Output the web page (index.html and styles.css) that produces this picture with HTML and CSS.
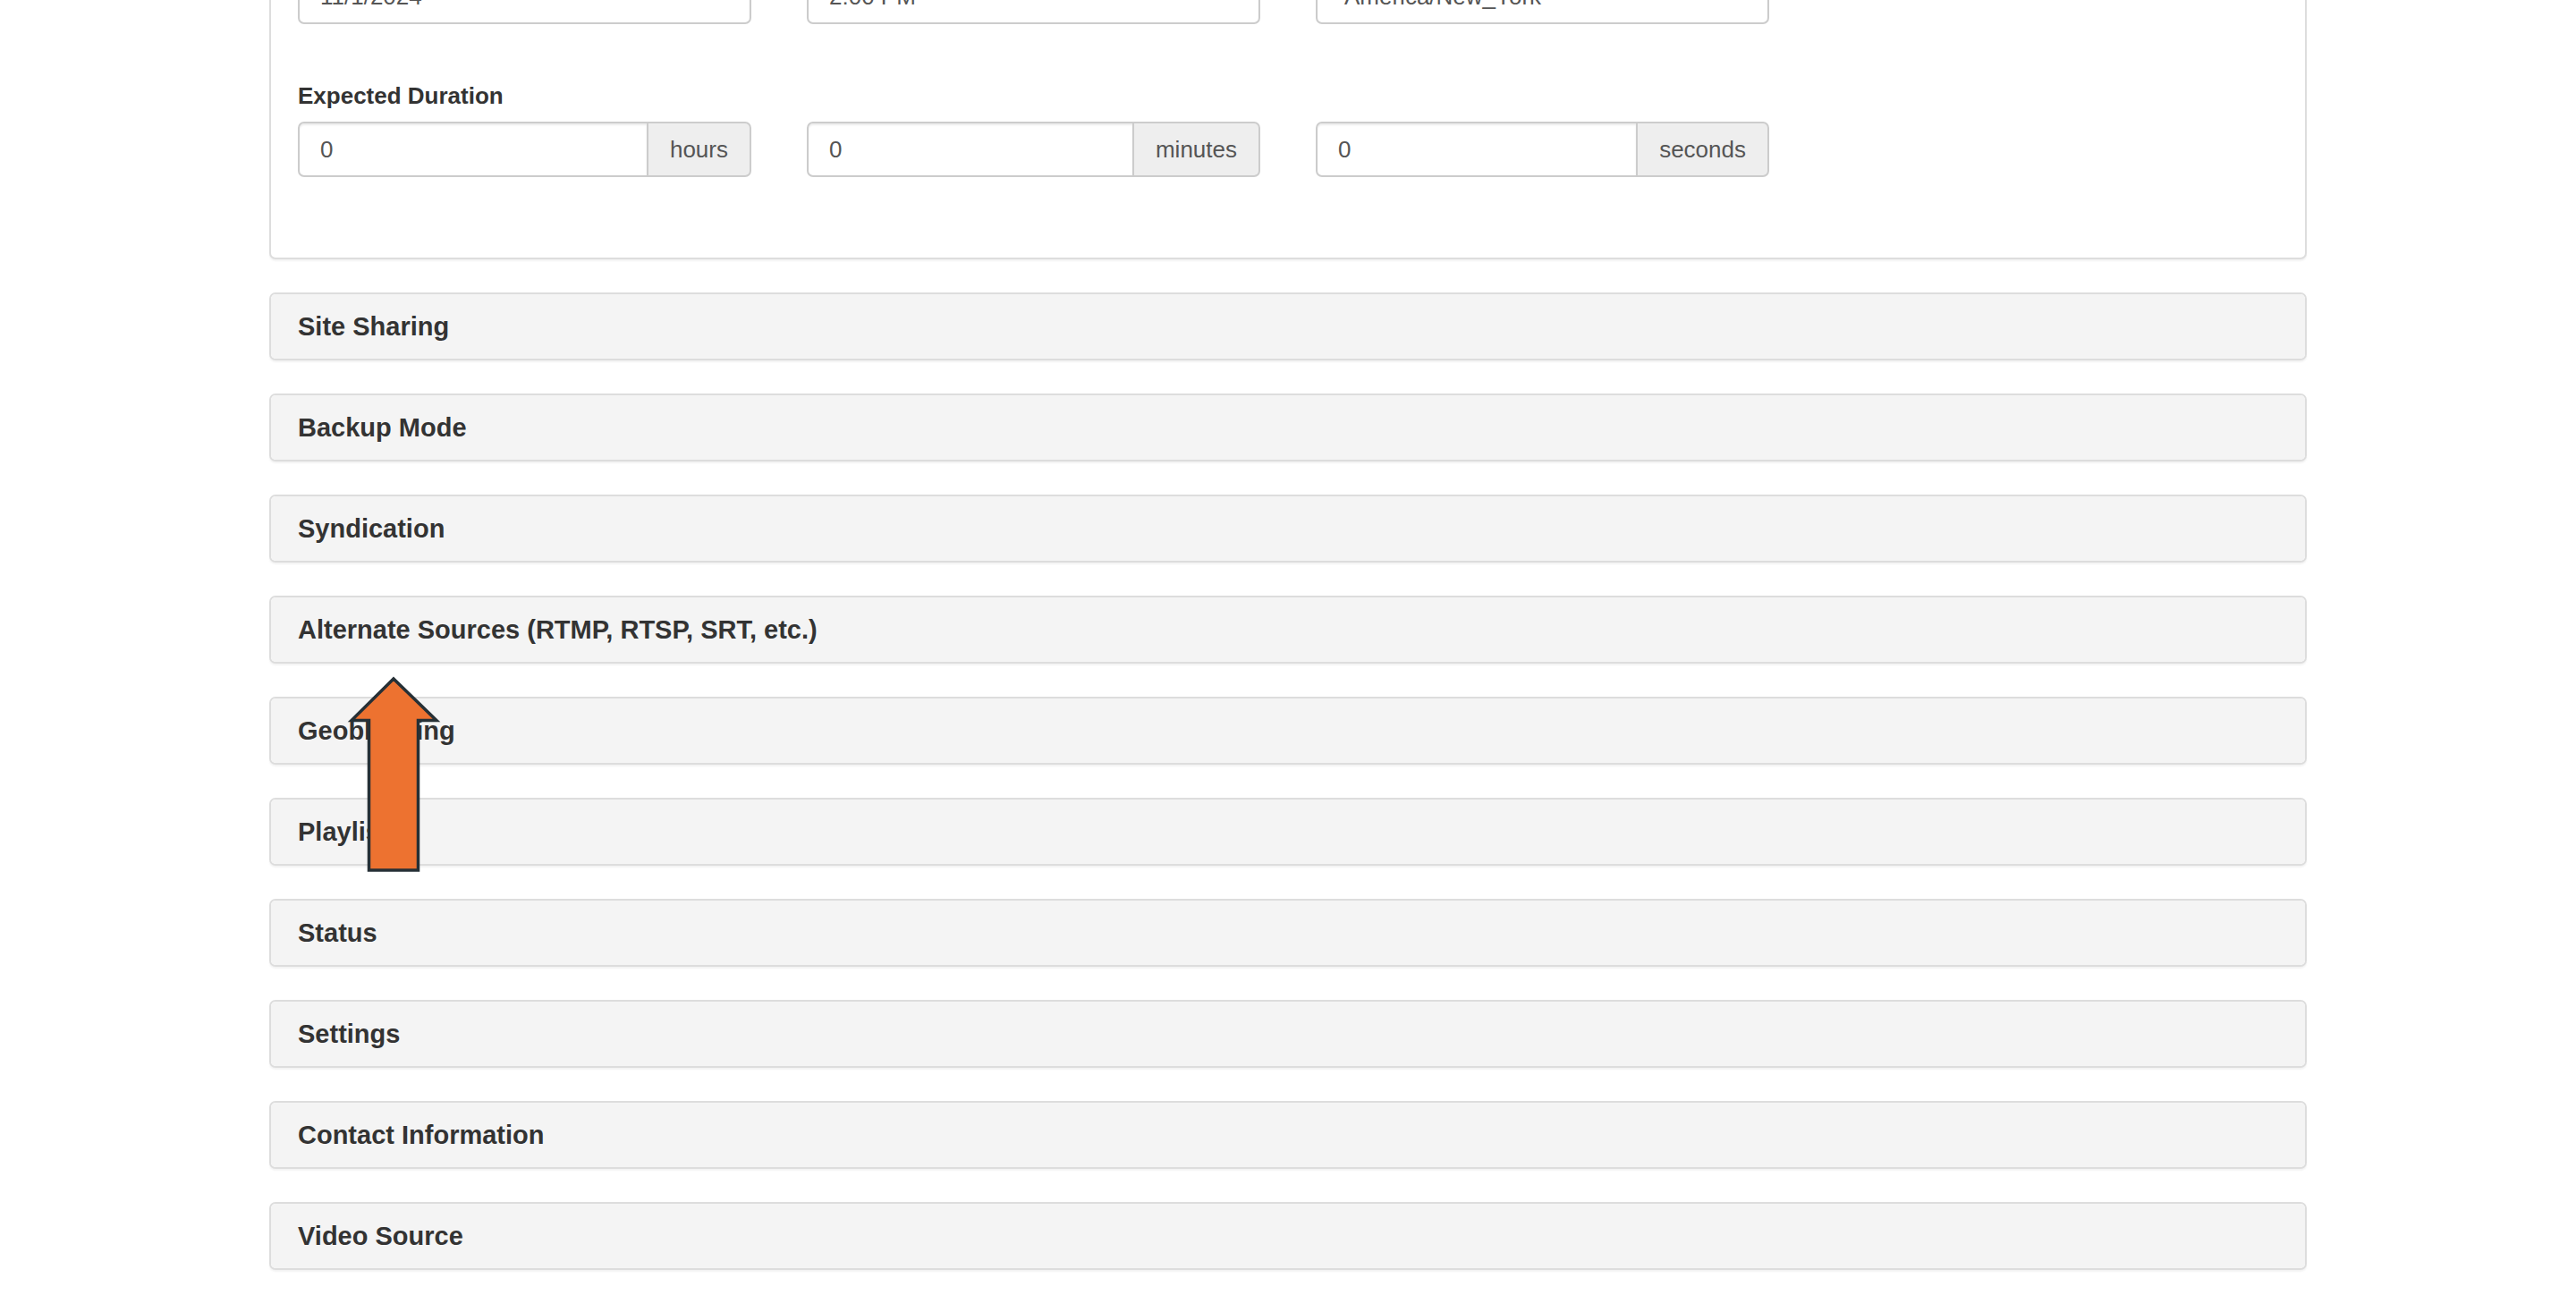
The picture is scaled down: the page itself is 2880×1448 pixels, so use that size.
FILE: index.html
```html
<!DOCTYPE html>
<html lang="en">
<head>
    <meta charset="UTF-8">
    <meta name="viewport" content="width=device-width, initial-scale=1.0">
    <title>Event Settings</title>
    <link rel="stylesheet" href="styles.css">
</head>
<body>
    <div class="page">
        <div class="panel schedule">
            <div class="panel-body">
                <div class="form-row first-row">
                    <div class="form-control">11/1/2024</div>
                    <div class="form-control">2:00 PM</div>
                    <div class="form-control select">
                        <span>America/New_York</span>
                        <svg class="caret" width="10" height="14" viewBox="0 0 10 14"><path d="M2 2 L5 -1 L8 2 M2 9 L5 12 L8 9" fill="none" stroke="#666" stroke-width="1.6"/></svg>
                    </div>
                </div>

                <label class="control-label">Expected Duration</label>
                <div class="form-row">
                    <div class="input-group">
                        <div class="form-control">0</div>
                        <span class="addon">hours</span>
                    </div>
                    <div class="input-group">
                        <div class="form-control">0</div>
                        <span class="addon">minutes</span>
                    </div>
                    <div class="input-group">
                        <div class="form-control">0</div>
                        <span class="addon">seconds</span>
                    </div>
                </div>
            </div>
        </div>

        <div class="panel"><div class="panel-heading"><h4>Site Sharing</h4></div></div>
        <div class="panel"><div class="panel-heading"><h4>Backup Mode</h4></div></div>
        <div class="panel"><div class="panel-heading"><h4>Syndication</h4></div></div>
        <div class="panel"><div class="panel-heading"><h4>Alternate Sources (RTMP, RTSP, SRT, etc.)</h4></div></div>
        <div class="panel"><div class="panel-heading"><h4>Geoblocking</h4></div></div>
        <div class="panel"><div class="panel-heading"><h4>Playlist</h4></div></div>
        <div class="panel"><div class="panel-heading"><h4>Status</h4></div></div>
        <div class="panel"><div class="panel-heading"><h4>Settings</h4></div></div>
        <div class="panel"><div class="panel-heading"><h4>Contact Information</h4></div></div>
        <div class="panel"><div class="panel-heading"><h4>Video Source</h4></div></div>
    </div>

    <!-- annotation arrow drawn over the page -->
    <svg class="annotation" width="2880" height="1448" viewBox="0 0 2880 1448">
        <polygon points="440,759 488,805.5 467.5,805.5 467.5,973 412.5,973 412.5,805.5 393,805.5"
                 fill="#ed7230" stroke="#263036" stroke-width="3.5" stroke-linejoin="miter"/>
    </svg>
</body>
</html>
```

FILE: styles.css
```css
body {
    margin: 0;
    background-color: #fff;
    font-family: "Liberation Sans", Helvetica, Arial, sans-serif;
    color: #333;
    overflow: hidden;
}
.page {
    width: 2278px;
    margin: -65px auto 0;
}
.panel {
    background-color: #fff;
    border: 2px solid #ddd;
    border-radius: 7px;
    box-shadow: 0 2px 2px rgba(0, 0, 0, 0.05);
    margin-bottom: 37px;
}
.panel-body {
    padding: 28px 30px 90px;
}
.form-row {
    display: grid;
    grid-template-columns: repeat(3, 507px);
    column-gap: 62px;
}
.first-row {
    margin-bottom: 62px;
}
.control-label {
    display: block;
    font-size: 26px;
    font-weight: bold;
    line-height: 36px;
    margin-bottom: 11px;
}
.form-control {
    box-sizing: border-box;
    height: 62px;
    padding: 0 23px;
    border: 2px solid #ccc;
    border-radius: 7px;
    background-color: #fff;
    box-shadow: inset 0 2px 2px rgba(0, 0, 0, 0.075);
    color: #555;
    font-size: 26px;
    display: flex;
    align-items: center;
}
.select {
    justify-content: space-between;
    padding: 0 14px 0 30px;
}
.caret {
    align-self: flex-start;
}
.input-group {
    display: flex;
}
.input-group .form-control {
    flex: 1;
    border-radius: 7px 0 0 7px;
}
.addon {
    box-sizing: border-box;
    height: 62px;
    padding: 0 24px;
    display: flex;
    align-items: center;
    background-color: #eee;
    border: 2px solid #ccc;
    border-left: 0;
    border-radius: 0 7px 7px 0;
    color: #555;
    font-size: 26px;
}
.panel-heading {
    background-color: #f4f4f4;
    border-radius: 5px;
    padding: 20px 30px;
}
.panel-heading h4 {
    margin: 0;
    font-size: 29px;
    line-height: 32px;
    font-weight: bold;
    color: #333;
}
.annotation {
    position: absolute;
    top: 0;
    left: 0;
    pointer-events: none;
}
```
